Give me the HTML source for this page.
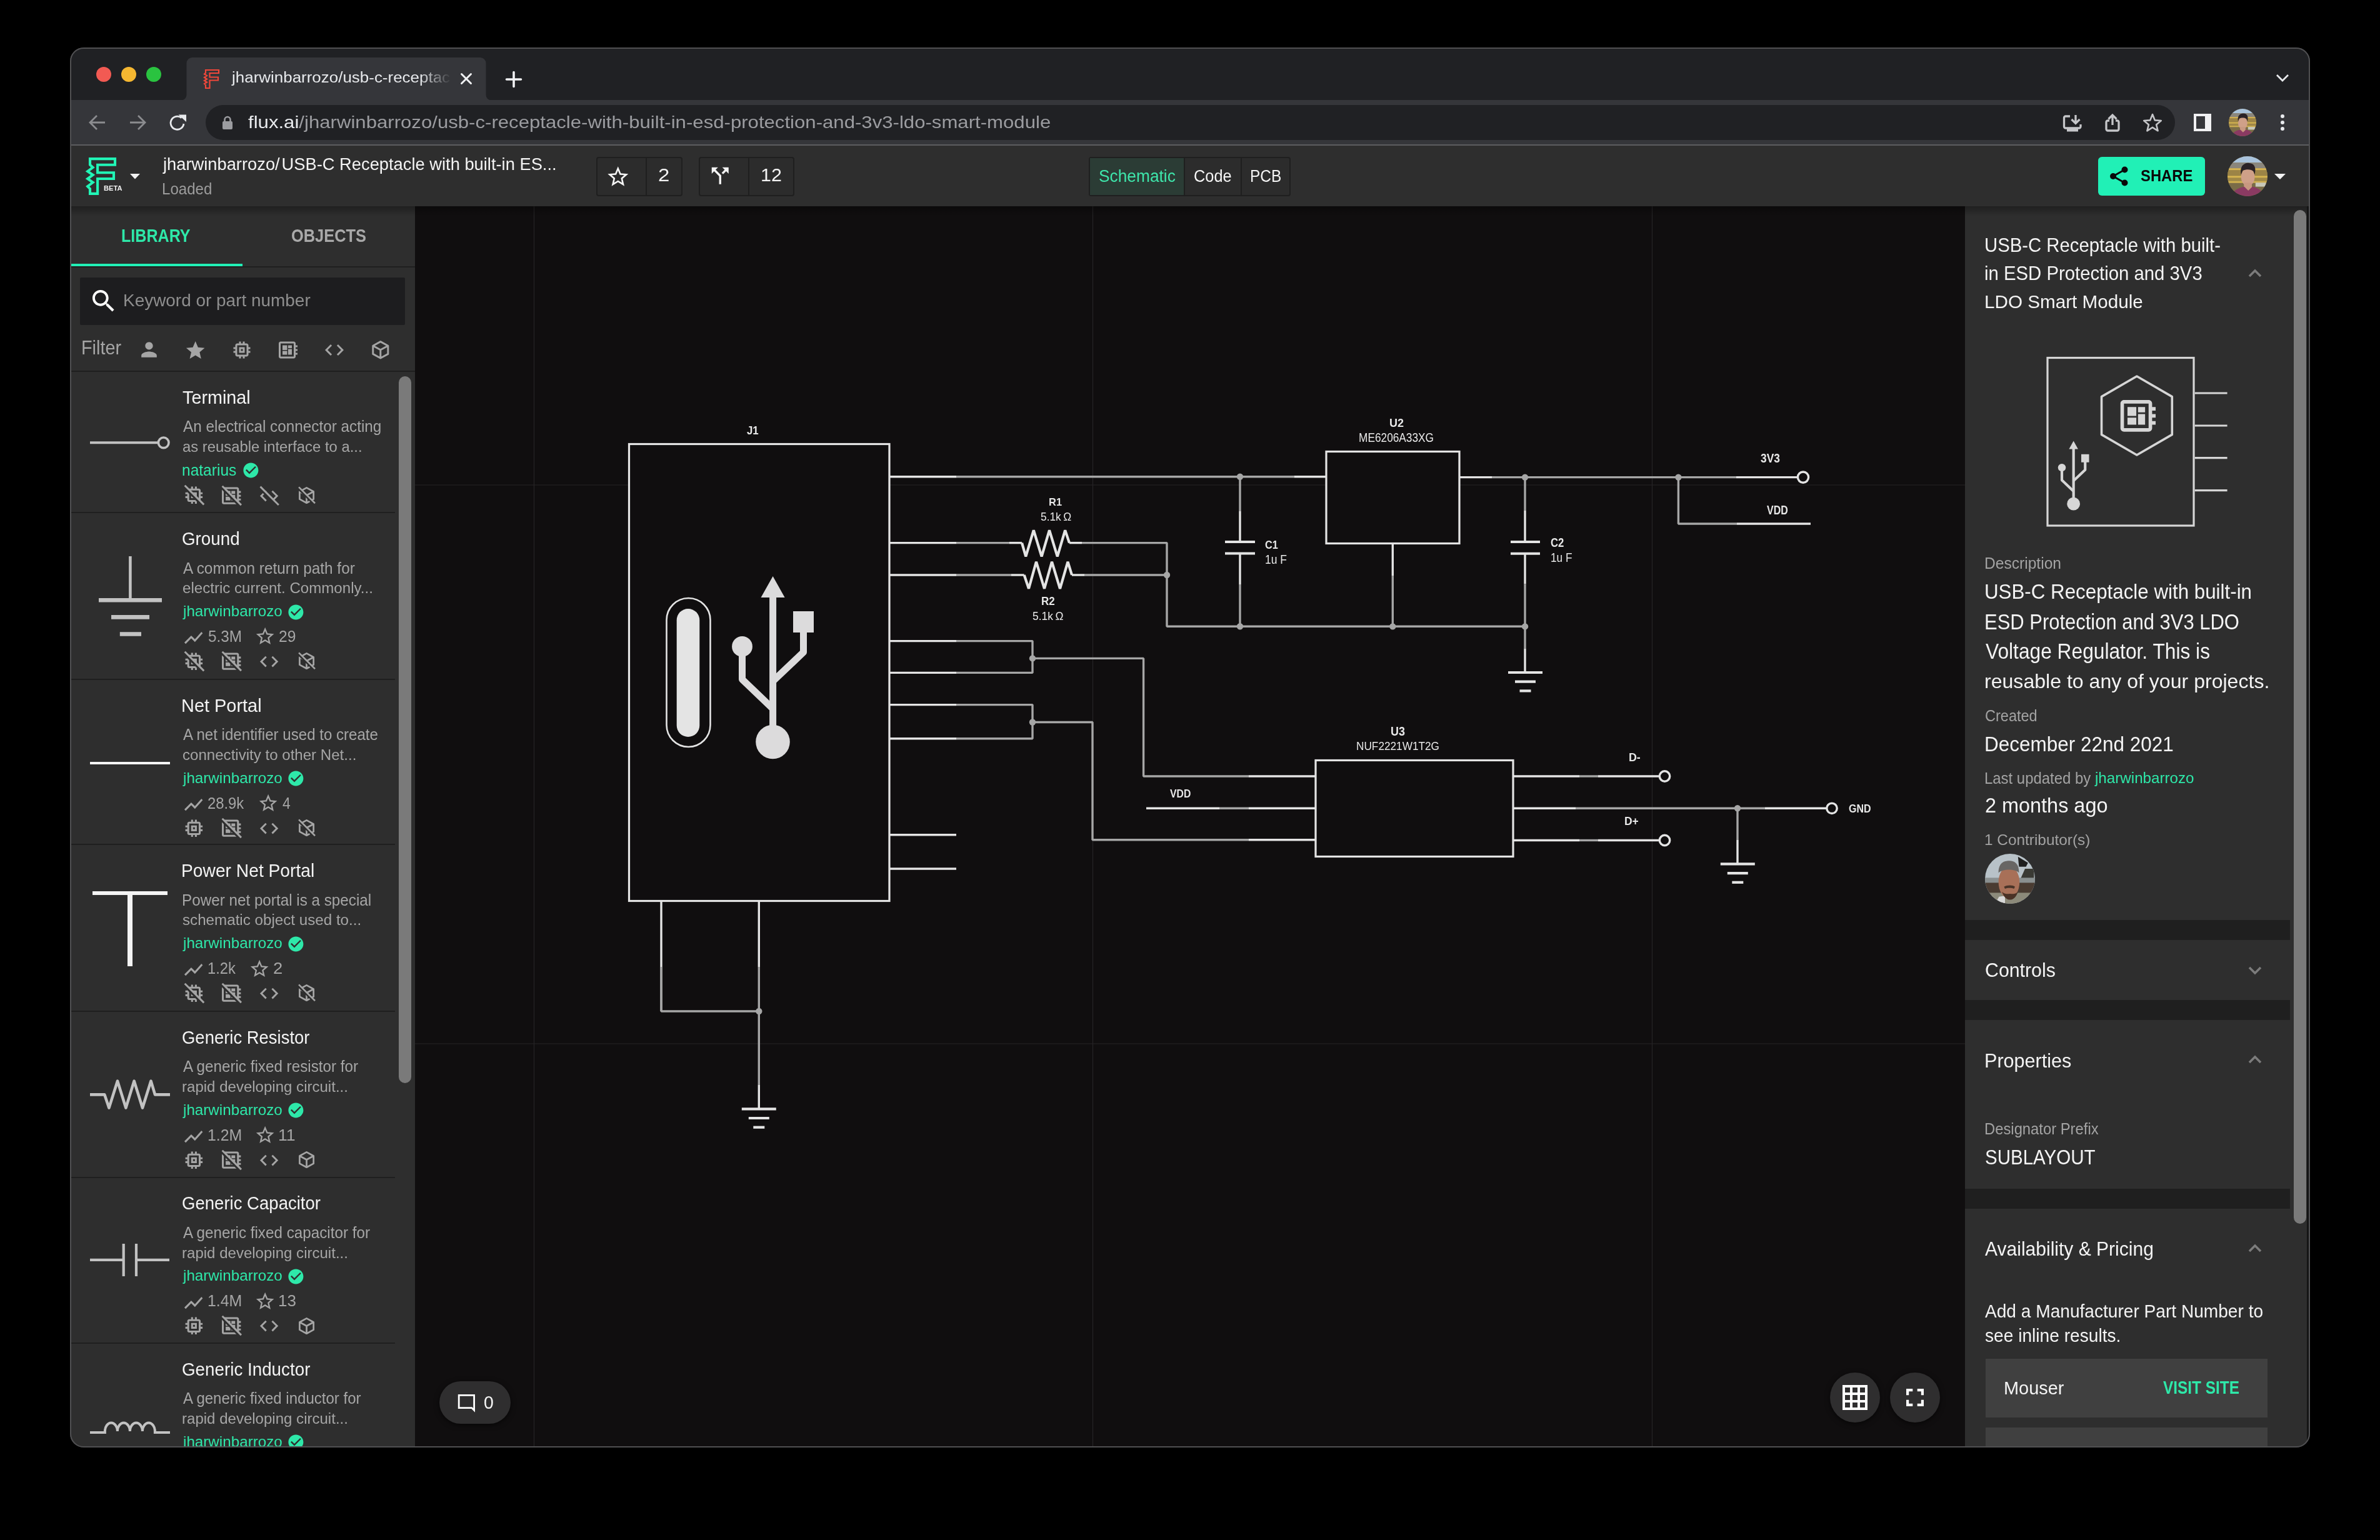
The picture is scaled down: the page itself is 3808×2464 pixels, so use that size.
<!DOCTYPE html>
<html><head><meta charset="utf-8">
<style>
*{box-sizing:border-box;margin:0;padding:0}
html,body{width:3808px;height:2464px;overflow:hidden;background:#000;font-family:"Liberation Sans",sans-serif}
.a{position:absolute}
.t{position:absolute;white-space:nowrap;line-height:1}
#win{position:absolute;left:112px;top:76px;width:3584px;height:2240px;border-radius:22px;overflow:hidden;background:#202124}
#bd{position:absolute;left:112px;top:76px;width:3584px;height:2240px;border-radius:22px;border:2px solid #505052;pointer-events:none}
#pg{position:absolute;left:-112px;top:-76px;width:3808px;height:2464px}
</style></head>
<body>
<div id="win"><div id="pg">
<!-- ===== TAB STRIP ===== -->
<div class="a" style="left:112px;top:76px;width:3584px;height:84px;background:#202124"></div>
<div class="a" style="left:154px;top:107px;width:24px;height:24px;border-radius:50%;background:#f25a53"></div>
<div class="a" style="left:194px;top:107px;width:24px;height:24px;border-radius:50%;background:#f5b731"></div>
<div class="a" style="left:234px;top:107px;width:24px;height:24px;border-radius:50%;background:#2ac340"></div>
<svg class="a" style="left:280px;top:88px" width="520" height="74" viewBox="280 88 520 74"><path d="M290 160.5 A8.5 8.5 0 0 0 298.5 152 V101 A9 9 0 0 1 307.5 92 H768.5 A9 9 0 0 1 777.5 101 V152 A8.5 8.5 0 0 0 786 160.5 V162 H290 Z" fill="#35363a"/></svg>
<!-- TABSTRIP_CONTENT --><svg class="a" style="left:320px;top:104px" width="40" height="44" viewBox="0 0 40 44"><path d="M9 8 L30 8 L30 13 L15.5 13 L15.5 19.5 L29 19.5 L29 24.5 L15.5 24.5 L15.5 37 L9 37 L9 32 L7 30 L11 27.5 L7 25 L11 22.5 L7 20 L11 17 L7 14.5 L9 12.5 Z" fill="none" stroke="#f0473a" stroke-width="2.2"/></svg><div class="a" style="left:360px;top:100px;width:362px;height:46px;overflow:hidden;-webkit-mask-image:linear-gradient(90deg,#000 0%,#000 86%,transparent 100%)"><div class="t" style="left:10.65px;top:12.47px;font-size:24.83px;color:#e8eaed;transform:scaleX(1.0452);transform-origin:0 0">jharwinbarrozo/usb-c-receptacle-with-built-in</div></div><svg class="a" style="left:734px;top:114px" width="24" height="24" viewBox="0 0 24 24"><path d="M4.5 4.5 L19.5 19.5 M19.5 4.5 L4.5 19.5" stroke="#f1f2f4" stroke-width="3" stroke-linecap="round"/></svg><svg class="a" style="left:808px;top:113px" width="28" height="28" viewBox="0 0 28 28"><path d="M14 2.5 V25.5 M2.5 14 H25.5" stroke="#f1f2f4" stroke-width="3.6" stroke-linecap="round"/></svg><svg class="a" style="left:3638px;top:114px" width="28" height="22" viewBox="0 0 28 22"><path d="M5 6 L14 15 L23 6" stroke="#e8eaed" stroke-width="2.8" fill="none"/></svg><!-- /TABSTRIP_CONTENT -->
<!-- ===== TOOLBAR ===== -->
<div class="a" style="left:112px;top:160px;width:3584px;height:72px;background:#35363a"></div>
<div class="a" style="left:329px;top:168px;width:3151px;height:56px;background:#202124;border-radius:28px"></div>
<div class="a" style="left:112px;top:231px;width:3584px;height:2px;background:#5c5d60"></div>
<!-- TOOLBAR_CONTENT --><svg class="a" style="left:140px;top:180px" width="32" height="32" viewBox="0 0 32 32"><path d="M28 16 H5 M15 5 L4 16 L15 27" stroke="#8b8c8f" stroke-width="2.8" fill="none"/></svg><svg class="a" style="left:204px;top:180px" width="32" height="32" viewBox="0 0 32 32"><path d="M4 16 H27 M17 5 L28 16 L17 27" stroke="#8b8c8f" stroke-width="2.8" fill="none"/></svg><svg class="a" style="left:268px;top:180px" width="34" height="34" viewBox="0 0 34 34"><path d="M26 18 A10.5 10.5 0 1 1 22.5 8.8" stroke="#e8eaed" stroke-width="2.8" fill="none"/><path d="M17.5 3.5 L30 3.5 L30 15 Z" fill="#e8eaed"/></svg><svg class="a" style="left:354px;top:184px" width="20" height="24" viewBox="0 0 20 24"><rect x="2" y="10" width="16" height="13" rx="2" fill="#9b9ca0"/><path d="M5.5 11 V7.5 A4.5 4.5 0 0 1 14.5 7.5 V11" stroke="#9b9ca0" stroke-width="2.6" fill="none"/></svg><div class="t" style="left:396.56px;top:182.06px;font-size:27.43px;color:#9b9ca0;transform:scaleX(1.1356);transform-origin:0 0"><span style="color:#e8eaed">flux.ai</span>/jharwinbarrozo/usb-c-receptacle-with-built-in-esd-protection-and-3v3-ldo-smart-module</div><svg class="a" style="left:3290px;top:170px" width="60" height="50" viewBox="3290 170 60 50"><path d="M3312 186 H3305 a2.5 2.5 0 0 0 -2.5 2.5 V202.5 a2.5 2.5 0 0 0 2.5 2.5 H3326.5 a2.5 2.5 0 0 0 2.5 -2.5 V199" stroke="#c5c6c9" stroke-width="3.3" fill="none"/><path d="M3321 184 V197 M3314.5 191 L3321 197.5 L3327.5 191" stroke="#c5c6c9" stroke-width="3.3" fill="none"/><rect x="3307" y="206" width="18" height="4.5" fill="#c5c6c9"/></svg><svg class="a" style="left:3360px;top:175px" width="40" height="45" viewBox="3360 175 40 45"><path d="M3375 193 H3372.5 a2.5 2.5 0 0 0 -2.5 2.5 V206.5 a2.5 2.5 0 0 0 2.5 2.5 H3387.5 a2.5 2.5 0 0 0 2.5 -2.5 V195.5 a2.5 2.5 0 0 0 -2.5 -2.5 H3385" stroke="#c5c6c9" stroke-width="3.3" fill="none"/><path d="M3380 200 V184.5 M3373.5 190.5 L3380 184 L3386.5 190.5" stroke="#c5c6c9" stroke-width="3.3" fill="none"/></svg><svg class="a" style="left:3427px;top:180px" width="34" height="34" viewBox="0 0 34 34"><path d="M17 3 L20.8 12.4 L30.8 13 L23.1 19.5 L25.6 29.3 L17 23.9 L8.4 29.3 L10.9 19.5 L3.2 13 L13.2 12.4 Z" stroke="#c5c6c9" stroke-width="2.6" fill="none" stroke-linejoin="round"/></svg><div class="a" style="left:3510px;top:182px;width:28px;height:28px;background:#f0f0f2"></div><div class="a" style="left:3514px;top:186px;width:14px;height:20px;background:#35363a"></div><svg class="a" style="left:3566px;top:174px" width="44" height="44" viewBox="0 0 100 100"><defs><clipPath id="avA"><circle cx="50" cy="50" r="50"/></clipPath></defs><g clip-path="url(#avA)">
<rect width="100" height="100" fill="#8c7a48"/>
<rect y="0" width="100" height="16" fill="#a9c3dc"/>
<rect y="16" width="100" height="14" fill="#8a867c"/>
<rect y="30" width="100" height="5" fill="#d6b454"/>
<rect y="35" width="100" height="14" fill="#9c8446"/>
<rect y="49" width="100" height="5" fill="#d8b650"/>
<rect y="54" width="100" height="8" fill="#a08848"/>
<rect y="62" width="100" height="5" fill="#d0b050"/>
<rect y="67" width="100" height="20" fill="#7a6c48"/>
<rect x="70" y="66" width="26" height="10" fill="#c8c8b8"/>
<ellipse cx="51" cy="52" rx="17" ry="22" fill="#cfa088"/>
<rect x="41" y="66" width="20" height="22" fill="#c89880"/>
<path d="M34 46 C30 24 42 16 54 17 C68 18 72 28 68 46 L65 38 C60 32 46 32 38 36 Z" fill="#2a2226"/>
<path d="M10 100 C14 84 30 78 42 76 L52 86 L62 76 C74 78 86 84 92 100 Z" fill="#8a3a62"/>
</g></svg><div class="a" style="left:3649px;top:183px;width:6px;height:6px;border-radius:50%;background:#e8eaed"></div><div class="a" style="left:3649px;top:193px;width:6px;height:6px;border-radius:50%;background:#e8eaed"></div><div class="a" style="left:3649px;top:203px;width:6px;height:6px;border-radius:50%;background:#e8eaed"></div><!-- /TOOLBAR_CONTENT -->
<!-- ===== APP HEADER ===== -->
<div class="a" style="left:112px;top:233px;width:3584px;height:97px;background:#2e2e2e"></div>
<!-- HEADER_CONTENT --><svg class="a" style="left:120px;top:236px" width="200" height="90" viewBox="0 0 200 90"><path d="M24 18.1 L64 18.1 L64 27.7 L36.1 27.7 L36.1 40.3 L62 40.3 L62 50 L36.1 50 L36.1 73.9 L24 73.9 L24 66 L20.2 62.2 L28.6 55.9 L20.2 50 L28.6 43.9 L20.2 38.2 L28.6 31.9 L24 27.7 Z" fill="none" stroke="#21f5b6" stroke-width="4.1"/><path d="M88 42 L104 42 L96 50.5 Z" fill="#f2f2f2"/></svg><div class="t" style="left:165.87px;top:296.22px;font-size:11.19px;color:#f2f2f2;font-weight:700;transform:scaleX(0.9928);transform-origin:0 0">BETA</div><div class="t" style="left:260.98px;top:248.09px;font-size:28.34px;color:#f4f4f4;transform:scaleX(0.9638);transform-origin:0 0">jharwinbarrozo/<span style="margin-left:3px"></span>USB-C Receptacle with built-in ES...</div><div class="t" style="left:259.32px;top:290.85px;font-size:24.85px;color:#9c9c9c;transform:scaleX(0.9696);transform-origin:0 0">Loaded</div><div class="a" style="left:954px;top:251px;width:138px;height:63px;border:2px solid #1f1f1f;border-radius:4px;background:#2c2c2c"></div><div class="a" style="left:1033px;top:253px;width:2px;height:59px;background:#1f1f1f"></div><svg class="a" style="left:968.7px;top:262.7px" width="39.6" height="39.6" viewBox="0 0 24 24"><path d="M22 9.24l-7.19-.62L12 2 9.19 8.63 2 9.24l5.46 4.73L5.82 21 12 17.27 18.18 21l-1.63-7.03L22 9.24zM12 15.4l-3.76 2.27 1-4.28-3.32-2.88 4.38-.38L12 6.1l1.71 4.04 4.38.38-3.32 2.88 1 4.28L12 15.4z" fill="#f5f5f5"/></svg><div class="t" style="left:1053.36px;top:266.38px;font-size:29.07px;color:#f4f4f4;transform:scaleX(1.1316);transform-origin:0 0">2</div><div class="a" style="left:1118px;top:251px;width:153px;height:63px;border:2px solid #1f1f1f;border-radius:4px;background:#2c2c2c"></div><div class="a" style="left:1197px;top:253px;width:2px;height:59px;background:#1f1f1f"></div><svg class="a" style="left:1132.25px;top:261.25px" width="40.5" height="40.5" viewBox="0 0 24 24"><path d="M14 4l2.29 2.29-2.88 2.88 1.42 1.42 2.88-2.88L20 10V4zm-4 0H4v6l2.29-2.29 4.71 4.7V20h2v-8.41l-5.29-5.3z" fill="#f5f5f5"/></svg><div class="t" style="left:1216.69px;top:266.38px;font-size:29.07px;color:#f4f4f4;transform:scaleX(1.0467);transform-origin:0 0">12</div><div class="a" style="left:1742px;top:251px;width:323px;height:63px;border:2px solid #1f1f1f;border-radius:4px;background:#2c2c2c"></div><div class="a" style="left:1744px;top:253px;width:151px;height:59px;background:#2b3c35"></div><div class="a" style="left:1894px;top:253px;width:2px;height:59px;background:#1f1f1f"></div><div class="a" style="left:1985px;top:253px;width:2px;height:59px;background:#1f1f1f"></div><div class="t" style="left:1757.82px;top:267.98px;font-size:27.18px;color:#3ee6ab;transform:scaleX(0.9684);transform-origin:0 0">Schematic</div><div class="t" style="left:1910.33px;top:267.98px;font-size:27.18px;color:#f4f4f4;transform:scaleX(0.9342);transform-origin:0 0">Code</div><div class="t" style="left:1999.79px;top:267.98px;font-size:27.18px;color:#f4f4f4;transform:scaleX(0.9016);transform-origin:0 0">PCB</div><div class="a" style="left:3357px;top:251px;width:171px;height:62px;border-radius:6px;background:#21f0b6"></div><svg class="a" style="left:3374px;top:264px" width="34" height="36" viewBox="0 0 34 36"><circle cx="25.5" cy="7.5" r="5" fill="#0a0a0a"/><circle cx="7" cy="18" r="5" fill="#0a0a0a"/><circle cx="25.5" cy="28.5" r="5" fill="#0a0a0a"/><path d="M25.5 7.5 L7 18 L25.5 28.5" stroke="#0a0a0a" stroke-width="3" fill="none"/></svg><div class="t" style="left:3425.43px;top:267.84px;font-size:26.16px;color:#0a0a0a;font-weight:700;transform:scaleX(0.9105);transform-origin:0 0">SHARE</div><svg class="a" style="left:3564px;top:250px" width="64" height="64" viewBox="0 0 100 100"><defs><clipPath id="avB"><circle cx="50" cy="50" r="50"/></clipPath></defs><g clip-path="url(#avB)">
<rect width="100" height="100" fill="#8c7a48"/>
<rect y="0" width="100" height="16" fill="#a9c3dc"/>
<rect y="16" width="100" height="14" fill="#8a867c"/>
<rect y="30" width="100" height="5" fill="#d6b454"/>
<rect y="35" width="100" height="14" fill="#9c8446"/>
<rect y="49" width="100" height="5" fill="#d8b650"/>
<rect y="54" width="100" height="8" fill="#a08848"/>
<rect y="62" width="100" height="5" fill="#d0b050"/>
<rect y="67" width="100" height="20" fill="#7a6c48"/>
<rect x="70" y="66" width="26" height="10" fill="#c8c8b8"/>
<ellipse cx="51" cy="52" rx="17" ry="22" fill="#cfa088"/>
<rect x="41" y="66" width="20" height="22" fill="#c89880"/>
<path d="M34 46 C30 24 42 16 54 17 C68 18 72 28 68 46 L65 38 C60 32 46 32 38 36 Z" fill="#2a2226"/>
<path d="M10 100 C14 84 30 78 42 76 L52 86 L62 76 C74 78 86 84 92 100 Z" fill="#8a3a62"/>
</g></svg><svg class="a" style="left:3636px;top:276px" width="24" height="14" viewBox="0 0 24 14"><path d="M3 2 L21 2 L12 11 Z" fill="#f2f2f2"/></svg><!-- /HEADER_CONTENT -->
<!-- ===== LEFT PANEL ===== -->
<div class="a" style="left:112px;top:330px;width:552px;height:1990px;background:#2e2e2e"></div>
<!-- LEFT_CONTENT --><div class="t" style="left:194.34px;top:363.38px;font-size:29.07px;color:#2ee8a9;font-weight:700;transform:scaleX(0.8630);transform-origin:0 0">LIBRARY</div><div class="t" style="left:465.96px;top:363.38px;font-size:29.07px;color:#a9a9a9;font-weight:700;transform:scaleX(0.8743);transform-origin:0 0">OBJECTS</div><div class="a" style="left:112px;top:422px;width:276px;height:4px;background:#21f0b6"></div><div class="a" style="left:112px;top:426px;width:552px;height:2px;background:#1f1f1f"></div><div class="a" style="left:128px;top:444px;width:520px;height:76px;background:#1d1d1f;border-radius:2px"></div><svg class="a" style="left:142.0px;top:457.8px;overflow:visible" width="47.5" height="47.5" viewBox="0 0 24 24"><path d="M15.5 14h-.79l-.28-.27C15.41 12.59 16 11.11 16 9.5 16 5.91 13.09 3 9.5 3S3 5.91 3 9.5 5.91 16 9.5 16c1.61 0 3.09-.59 4.23-1.57l.27.28v.79l5 4.99L20.49 19l-4.99-5zm-6 0C7.01 14 5 11.99 5 9.5S7.01 5 9.5 5 14 7.01 14 9.5 11.99 14 9.5 14z" fill="#ffffff"/></svg><div class="t" style="left:196.71px;top:465.87px;font-size:28.49px;color:#8e8e8e;transform:scaleX(0.9808);transform-origin:0 0">Keyword or part number</div><div class="t" style="left:130.44px;top:541.15px;font-size:30.52px;color:#a5a5a5;transform:scaleX(0.9440);transform-origin:0 0">Filter</div><svg class="a" style="left:220.4px;top:541.3px;overflow:visible" width="37.0" height="37.0" viewBox="0 0 24 24"><path d="M12 12c2.21 0 4-1.79 4-4s-1.79-4-4-4-4 1.79-4 4 1.79 4 4 4zm0 2c-2.67 0-8 1.34-8 4v2h16v-2c0-2.66-5.33-4-8-4z" fill="#a5a5a5"/></svg><svg class="a" style="left:295.0px;top:543.4px;overflow:visible" width="35.4" height="35.4" viewBox="0 0 24 24"><path d="M12 17.27L18.18 21l-1.64-7.03L22 9.24l-7.19-.61L12 2 9.19 8.63 2 9.24l5.46 4.73L5.82 21z" fill="#a5a5a5"/></svg><svg class="a" style="left:368.5px;top:541.8px;overflow:visible" width="36.0" height="36.0" viewBox="0 0 24 24"><path d="M15 9H9v6h6V9zm-2 4h-2v-2h2v2zm8-2V9h-2V7c0-1.1-.9-2-2-2h-2V3h-2v2h-2V3H9v2H7c-1.1 0-2 .9-2 2v2H3v2h2v2H3v2h2v2c0 1.1.9 2 2 2h2v2h2v-2h2v2h2v-2h2c1.1 0 2-.9 2-2v-2h2v-2h-2v-2h2zm-4 6H7V7h10v10z" fill="#a5a5a5"/></svg><svg class="a" style="left:443.0px;top:541.8px;overflow:visible" width="36.0" height="36.0" viewBox="0 0 24 24"><path d="M22 9V7h-2V5c0-1.1-.9-2-2-2H4c-1.1 0-2 .9-2 2v14c0 1.1.9 2 2 2h14c1.1 0 2-.9 2-2v-2h2v-2h-2v-2h2v-2h-2V9h2zm-4 10H4V5h14v14zM6 13h5v4H6zm6-6h4v3h-4zM6 7h5v5H6zm6 4h4v6h-4z" fill="#a5a5a5"/></svg><svg class="a" style="left:517.0px;top:542.0px;overflow:visible" width="36.0" height="36.0" viewBox="0 0 24 24"><path d="M9.4 16.6L4.8 12l4.6-4.6L8 6l-6 6 6 6 1.4-1.4zm5.2 0l4.6-4.6-4.6-4.6L16 6l6 6-6 6-1.4-1.4z" fill="#a5a5a5"/></svg><svg class="a" style="left:592.4px;top:543.2px;overflow:visible" width="33.6" height="33.6" viewBox="0 0 24 24"><path d="M12 2.6 L20.6 7.3 V16.7 L12 21.4 L3.4 16.7 V7.3 Z M3.4 7.3 L12 12 L20.6 7.3 M12 12 V21.4" fill="none" stroke="#a5a5a5" stroke-width="2.1" stroke-linejoin="round"/></svg><div class="a" style="left:112px;top:593px;width:552px;height:2px;background:#1f1f1f"></div><div class="t" style="left:292.17px;top:620.51px;font-size:29.51px;color:#f4f4f4;transform:scaleX(0.9752);transform-origin:0 0">Terminal</div><div class="t" style="left:292.55px;top:670.39px;font-size:25.87px;color:#a6a6a6;transform:scaleX(0.9395);transform-origin:0 0">An electrical connector acting</div><div class="t" style="left:291.60px;top:703.09px;font-size:24.69px;color:#a6a6a6;transform:scaleX(0.9655);transform-origin:0 0">as reusable interface to a...</div><div class="t" style="left:291.18px;top:738.78px;font-size:26.00px;color:#2ee8a9;transform:scaleX(0.9437);transform-origin:0 0">natarius</div><svg class="a" style="left:386.6px;top:738.4px;overflow:visible" width="28.8" height="28.8" viewBox="0 0 24 24"><path d="M12 2C6.48 2 2 6.48 2 12s4.48 10 10 10 10-4.48 10-10S17.52 2 12 2zm-2 15l-5-5 1.41-1.41L10 14.17l7.59-7.59L19 8l-9 9z" fill="#2ee8a9"/></svg><svg class="a" style="left:291.8px;top:774.4px;overflow:visible" width="36.7" height="36.7" viewBox="0 0 24 24"><path d="M15 9H9v6h6V9zm-2 4h-2v-2h2v2zm8-2V9h-2V7c0-1.1-.9-2-2-2h-2V3h-2v2h-2V3H9v2H7c-1.1 0-2 .9-2 2v2H3v2h2v2H3v2h2v2c0 1.1.9 2 2 2h2v2h2v-2h2v2h2v-2h2c1.1 0 2-.9 2-2v-2h2v-2h-2v-2h2zm-4 6H7V7h10v10z" fill="#a5a5a5"/><path d="M2.2 3.4 L21.6 22.8" stroke="#2e2e2e" stroke-width="3.4"/><path d="M2.4 1.8 L22.4 21.8" stroke="#a5a5a5" stroke-width="2"/></svg><svg class="a" style="left:351.7px;top:774.5px;overflow:visible" width="36.4" height="36.4" viewBox="0 0 24 24"><path d="M22 9V7h-2V5c0-1.1-.9-2-2-2H4c-1.1 0-2 .9-2 2v14c0 1.1.9 2 2 2h14c1.1 0 2-.9 2-2v-2h2v-2h-2v-2h2v-2h-2V9h2zm-4 10H4V5h14v14zM6 13h5v4H6zm6-6h4v3h-4zM6 7h5v5H6zm6 4h4v6h-4z" fill="#a5a5a5"/><path d="M2.2 3.4 L21.6 22.8" stroke="#2e2e2e" stroke-width="3.4"/><path d="M2.4 1.8 L22.4 21.8" stroke="#a5a5a5" stroke-width="2"/></svg><svg class="a" style="left:412.8px;top:775.6px;overflow:visible" width="35.2" height="35.2" viewBox="0 0 24 24"><path d="M9.4 16.6L4.8 12l4.6-4.6L8 6l-6 6 6 6 1.4-1.4zm5.2 0l4.6-4.6-4.6-4.6L16 6l6 6-6 6-1.4-1.4z" fill="#a5a5a5"/><path d="M2.2 3.4 L21.6 22.8" stroke="#2e2e2e" stroke-width="3.4"/><path d="M2.4 1.8 L22.4 21.8" stroke="#a5a5a5" stroke-width="2"/></svg><svg class="a" style="left:474.9px;top:777.0px;overflow:visible" width="31.1" height="31.1" viewBox="0 0 24 24"><path d="M12 2.6 L20.6 7.3 V16.7 L12 21.4 L3.4 16.7 V7.3 Z M3.4 7.3 L12 12 L20.6 7.3 M12 12 V21.4" fill="none" stroke="#a5a5a5" stroke-width="2.1" stroke-linejoin="round"/><path d="M2.2 3.4 L21.6 22.8" stroke="#2e2e2e" stroke-width="3.4"/><path d="M2.4 1.8 L22.4 21.8" stroke="#a5a5a5" stroke-width="2"/></svg><svg class="a" style="left:130px;top:684px" width="150" height="50" viewBox="0 0 150 50"><path d="M14 24.3 H122" stroke="#c2c2c2" stroke-width="4"/><circle cx="131.7" cy="24.3" r="8.3" stroke="#c2c2c2" stroke-width="3.6" fill="none"/></svg><div class="t" style="left:291.41px;top:846.71px;font-size:29.51px;color:#f4f4f4;transform:scaleX(0.9417);transform-origin:0 0">Ground</div><div class="t" style="left:292.55px;top:896.59px;font-size:25.87px;color:#a6a6a6;transform:scaleX(0.9418);transform-origin:0 0">A common return path for</div><div class="t" style="left:291.59px;top:929.29px;font-size:24.69px;color:#a6a6a6;transform:scaleX(0.9760);transform-origin:0 0">electric current. Commonly...</div><div class="t" style="left:292.51px;top:966.90px;font-size:23.73px;color:#2ee8a9;transform:scaleX(1.0208);transform-origin:0 0">jharwinbarrozo</div><svg class="a" style="left:458.6px;top:964.6px;overflow:visible" width="28.8" height="28.8" viewBox="0 0 24 24"><path d="M12 2C6.48 2 2 6.48 2 12s4.48 10 10 10 10-4.48 10-10S17.52 2 12 2zm-2 15l-5-5 1.41-1.41L10 14.17l7.59-7.59L19 8l-9 9z" fill="#2ee8a9"/></svg><svg class="a" style="left:292.4px;top:1003.3px;overflow:visible" width="35.3" height="35.3" viewBox="0 0 24 24"><path d="M3.5 18.49l6-6.01 4 4L22 6.92l-1.41-1.41-7.09 7.97-4-4L2 16.99z" fill="#a5a5a5"/></svg><div class="t" style="left:332.63px;top:1005.73px;font-size:25.00px;color:#a5a5a5;transform:scaleX(0.9729);transform-origin:0 0">5.3M</div><svg class="a" style="left:406.8px;top:1001.4px;overflow:visible" width="34.3" height="34.3" viewBox="0 0 24 24"><path d="M22 9.24l-7.19-.62L12 2 9.19 8.63 2 9.24l5.46 4.73L5.82 21 12 17.27 18.18 21l-1.63-7.03L22 9.24zM12 15.4l-3.76 2.27 1-4.28-3.32-2.88 4.38-.38L12 6.1l1.71 4.04 4.38.38-3.32 2.88 1 4.28L12 15.4z" fill="#a5a5a5"/></svg><div class="t" style="left:445.67px;top:1005.73px;font-size:25.00px;color:#a5a5a5;transform:scaleX(0.9852);transform-origin:0 0">29</div><svg class="a" style="left:291.8px;top:1039.7px;overflow:visible" width="36.7" height="36.7" viewBox="0 0 24 24"><path d="M15 9H9v6h6V9zm-2 4h-2v-2h2v2zm8-2V9h-2V7c0-1.1-.9-2-2-2h-2V3h-2v2h-2V3H9v2H7c-1.1 0-2 .9-2 2v2H3v2h2v2H3v2h2v2c0 1.1.9 2 2 2h2v2h2v-2h2v2h2v-2h2c1.1 0 2-.9 2-2v-2h2v-2h-2v-2h2zm-4 6H7V7h10v10z" fill="#a5a5a5"/><path d="M2.2 3.4 L21.6 22.8" stroke="#2e2e2e" stroke-width="3.4"/><path d="M2.4 1.8 L22.4 21.8" stroke="#a5a5a5" stroke-width="2"/></svg><svg class="a" style="left:351.7px;top:1039.8px;overflow:visible" width="36.4" height="36.4" viewBox="0 0 24 24"><path d="M22 9V7h-2V5c0-1.1-.9-2-2-2H4c-1.1 0-2 .9-2 2v14c0 1.1.9 2 2 2h14c1.1 0 2-.9 2-2v-2h2v-2h-2v-2h2v-2h-2V9h2zm-4 10H4V5h14v14zM6 13h5v4H6zm6-6h4v3h-4zM6 7h5v5H6zm6 4h4v6h-4z" fill="#a5a5a5"/><path d="M2.2 3.4 L21.6 22.8" stroke="#2e2e2e" stroke-width="3.4"/><path d="M2.4 1.8 L22.4 21.8" stroke="#a5a5a5" stroke-width="2"/></svg><svg class="a" style="left:412.8px;top:1040.9px;overflow:visible" width="35.2" height="35.2" viewBox="0 0 24 24"><path d="M9.4 16.6L4.8 12l4.6-4.6L8 6l-6 6 6 6 1.4-1.4zm5.2 0l4.6-4.6-4.6-4.6L16 6l6 6-6 6-1.4-1.4z" fill="#a5a5a5"/></svg><svg class="a" style="left:474.9px;top:1042.3px;overflow:visible" width="31.1" height="31.1" viewBox="0 0 24 24"><path d="M12 2.6 L20.6 7.3 V16.7 L12 21.4 L3.4 16.7 V7.3 Z M3.4 7.3 L12 12 L20.6 7.3 M12 12 V21.4" fill="none" stroke="#a5a5a5" stroke-width="2.1" stroke-linejoin="round"/><path d="M2.2 3.4 L21.6 22.8" stroke="#2e2e2e" stroke-width="3.4"/><path d="M2.4 1.8 L22.4 21.8" stroke="#a5a5a5" stroke-width="2"/></svg><div class="a" style="left:112px;top:819.2px;width:520px;height:2px;background:#1f1f1f"></div><svg class="a" style="left:130px;top:820px" width="150" height="220" viewBox="130 820 150 220"><path d="M208.4 890 V958" stroke="#c2c2c2" stroke-width="4.6"/><path d="M158 960.3 H259 M178 987.4 H239 M191.8 1014.5 H226" stroke="#c2c2c2" stroke-width="6.6"/></svg><div class="t" style="left:290.43px;top:1113.51px;font-size:29.51px;color:#f4f4f4;transform:scaleX(0.9802);transform-origin:0 0">Net Portal</div><div class="t" style="left:292.55px;top:1163.39px;font-size:25.87px;color:#a6a6a6;transform:scaleX(0.9313);transform-origin:0 0">A net identifier used to create</div><div class="t" style="left:291.59px;top:1196.09px;font-size:24.69px;color:#a6a6a6;transform:scaleX(0.9753);transform-origin:0 0">connectivity to other Net...</div><div class="t" style="left:292.51px;top:1233.70px;font-size:23.73px;color:#2ee8a9;transform:scaleX(1.0208);transform-origin:0 0">jharwinbarrozo</div><svg class="a" style="left:458.6px;top:1231.4px;overflow:visible" width="28.8" height="28.8" viewBox="0 0 24 24"><path d="M12 2C6.48 2 2 6.48 2 12s4.48 10 10 10 10-4.48 10-10S17.52 2 12 2zm-2 15l-5-5 1.41-1.41L10 14.17l7.59-7.59L19 8l-9 9z" fill="#2ee8a9"/></svg><svg class="a" style="left:292.4px;top:1270.1px;overflow:visible" width="35.3" height="35.3" viewBox="0 0 24 24"><path d="M3.5 18.49l6-6.01 4 4L22 6.92l-1.41-1.41-7.09 7.97-4-4L2 16.99z" fill="#a5a5a5"/></svg><div class="t" style="left:332.41px;top:1272.53px;font-size:25.00px;color:#a5a5a5;transform:scaleX(0.9525);transform-origin:0 0">28.9k</div><svg class="a" style="left:412.3px;top:1268.2px;overflow:visible" width="34.3" height="34.3" viewBox="0 0 24 24"><path d="M22 9.24l-7.19-.62L12 2 9.19 8.63 2 9.24l5.46 4.73L5.82 21 12 17.27 18.18 21l-1.63-7.03L22 9.24zM12 15.4l-3.76 2.27 1-4.28-3.32-2.88 4.38-.38L12 6.1l1.71 4.04 4.38.38-3.32 2.88 1 4.28L12 15.4z" fill="#a5a5a5"/></svg><div class="t" style="left:451.89px;top:1272.53px;font-size:25.00px;color:#a5a5a5;transform:scaleX(0.9188);transform-origin:0 0">4</div><svg class="a" style="left:291.8px;top:1306.5px;overflow:visible" width="36.7" height="36.7" viewBox="0 0 24 24"><path d="M15 9H9v6h6V9zm-2 4h-2v-2h2v2zm8-2V9h-2V7c0-1.1-.9-2-2-2h-2V3h-2v2h-2V3H9v2H7c-1.1 0-2 .9-2 2v2H3v2h2v2H3v2h2v2c0 1.1.9 2 2 2h2v2h2v-2h2v2h2v-2h2c1.1 0 2-.9 2-2v-2h2v-2h-2v-2h2zm-4 6H7V7h10v10z" fill="#a5a5a5"/></svg><svg class="a" style="left:351.7px;top:1306.6px;overflow:visible" width="36.4" height="36.4" viewBox="0 0 24 24"><path d="M22 9V7h-2V5c0-1.1-.9-2-2-2H4c-1.1 0-2 .9-2 2v14c0 1.1.9 2 2 2h14c1.1 0 2-.9 2-2v-2h2v-2h-2v-2h2v-2h-2V9h2zm-4 10H4V5h14v14zM6 13h5v4H6zm6-6h4v3h-4zM6 7h5v5H6zm6 4h4v6h-4z" fill="#a5a5a5"/><path d="M2.2 3.4 L21.6 22.8" stroke="#2e2e2e" stroke-width="3.4"/><path d="M2.4 1.8 L22.4 21.8" stroke="#a5a5a5" stroke-width="2"/></svg><svg class="a" style="left:412.8px;top:1307.7px;overflow:visible" width="35.2" height="35.2" viewBox="0 0 24 24"><path d="M9.4 16.6L4.8 12l4.6-4.6L8 6l-6 6 6 6 1.4-1.4zm5.2 0l4.6-4.6-4.6-4.6L16 6l6 6-6 6-1.4-1.4z" fill="#a5a5a5"/></svg><svg class="a" style="left:474.9px;top:1309.1px;overflow:visible" width="31.1" height="31.1" viewBox="0 0 24 24"><path d="M12 2.6 L20.6 7.3 V16.7 L12 21.4 L3.4 16.7 V7.3 Z M3.4 7.3 L12 12 L20.6 7.3 M12 12 V21.4" fill="none" stroke="#a5a5a5" stroke-width="2.1" stroke-linejoin="round"/><path d="M2.2 3.4 L21.6 22.8" stroke="#2e2e2e" stroke-width="3.4"/><path d="M2.4 1.8 L22.4 21.8" stroke="#a5a5a5" stroke-width="2"/></svg><div class="a" style="left:112px;top:1086.0px;width:520px;height:2px;background:#1f1f1f"></div><div class="a" style="left:144px;top:1218.5px;width:128px;height:4px;background:#f4f4f4"></div><div class="t" style="left:290.49px;top:1377.81px;font-size:29.51px;color:#f4f4f4;transform:scaleX(0.9564);transform-origin:0 0">Power Net Portal</div><div class="t" style="left:290.61px;top:1427.69px;font-size:25.87px;color:#a6a6a6;transform:scaleX(0.9374);transform-origin:0 0">Power net portal is a special</div><div class="t" style="left:291.95px;top:1460.39px;font-size:24.69px;color:#a6a6a6;transform:scaleX(0.9792);transform-origin:0 0">schematic object used to...</div><div class="t" style="left:292.51px;top:1498.00px;font-size:23.73px;color:#2ee8a9;transform:scaleX(1.0208);transform-origin:0 0">jharwinbarrozo</div><svg class="a" style="left:458.6px;top:1495.7px;overflow:visible" width="28.8" height="28.8" viewBox="0 0 24 24"><path d="M12 2C6.48 2 2 6.48 2 12s4.48 10 10 10 10-4.48 10-10S17.52 2 12 2zm-2 15l-5-5 1.41-1.41L10 14.17l7.59-7.59L19 8l-9 9z" fill="#2ee8a9"/></svg><svg class="a" style="left:292.4px;top:1534.4px;overflow:visible" width="35.3" height="35.3" viewBox="0 0 24 24"><path d="M3.5 18.49l6-6.01 4 4L22 6.92l-1.41-1.41-7.09 7.97-4-4L2 16.99z" fill="#a5a5a5"/></svg><div class="t" style="left:331.79px;top:1536.83px;font-size:25.00px;color:#a5a5a5;transform:scaleX(0.9515);transform-origin:0 0">1.2k</div><svg class="a" style="left:398.4px;top:1532.5px;overflow:visible" width="34.3" height="34.3" viewBox="0 0 24 24"><path d="M22 9.24l-7.19-.62L12 2 9.19 8.63 2 9.24l5.46 4.73L5.82 21 12 17.27 18.18 21l-1.63-7.03L22 9.24zM12 15.4l-3.76 2.27 1-4.28-3.32-2.88 4.38-.38L12 6.1l1.71 4.04 4.38.38-3.32 2.88 1 4.28L12 15.4z" fill="#a5a5a5"/></svg><div class="t" style="left:437.13px;top:1536.83px;font-size:25.00px;color:#a5a5a5;transform:scaleX(1.0965);transform-origin:0 0">2</div><svg class="a" style="left:291.8px;top:1570.8px;overflow:visible" width="36.7" height="36.7" viewBox="0 0 24 24"><path d="M15 9H9v6h6V9zm-2 4h-2v-2h2v2zm8-2V9h-2V7c0-1.1-.9-2-2-2h-2V3h-2v2h-2V3H9v2H7c-1.1 0-2 .9-2 2v2H3v2h2v2H3v2h2v2c0 1.1.9 2 2 2h2v2h2v-2h2v2h2v-2h2c1.1 0 2-.9 2-2v-2h2v-2h-2v-2h2zm-4 6H7V7h10v10z" fill="#a5a5a5"/><path d="M2.2 3.4 L21.6 22.8" stroke="#2e2e2e" stroke-width="3.4"/><path d="M2.4 1.8 L22.4 21.8" stroke="#a5a5a5" stroke-width="2"/></svg><svg class="a" style="left:351.7px;top:1570.9px;overflow:visible" width="36.4" height="36.4" viewBox="0 0 24 24"><path d="M22 9V7h-2V5c0-1.1-.9-2-2-2H4c-1.1 0-2 .9-2 2v14c0 1.1.9 2 2 2h14c1.1 0 2-.9 2-2v-2h2v-2h-2v-2h2v-2h-2V9h2zm-4 10H4V5h14v14zM6 13h5v4H6zm6-6h4v3h-4zM6 7h5v5H6zm6 4h4v6h-4z" fill="#a5a5a5"/><path d="M2.2 3.4 L21.6 22.8" stroke="#2e2e2e" stroke-width="3.4"/><path d="M2.4 1.8 L22.4 21.8" stroke="#a5a5a5" stroke-width="2"/></svg><svg class="a" style="left:412.8px;top:1572.0px;overflow:visible" width="35.2" height="35.2" viewBox="0 0 24 24"><path d="M9.4 16.6L4.8 12l4.6-4.6L8 6l-6 6 6 6 1.4-1.4zm5.2 0l4.6-4.6-4.6-4.6L16 6l6 6-6 6-1.4-1.4z" fill="#a5a5a5"/></svg><svg class="a" style="left:474.9px;top:1573.4px;overflow:visible" width="31.1" height="31.1" viewBox="0 0 24 24"><path d="M12 2.6 L20.6 7.3 V16.7 L12 21.4 L3.4 16.7 V7.3 Z M3.4 7.3 L12 12 L20.6 7.3 M12 12 V21.4" fill="none" stroke="#a5a5a5" stroke-width="2.1" stroke-linejoin="round"/><path d="M2.2 3.4 L21.6 22.8" stroke="#2e2e2e" stroke-width="3.4"/><path d="M2.4 1.8 L22.4 21.8" stroke="#a5a5a5" stroke-width="2"/></svg><div class="a" style="left:112px;top:1350.3px;width:520px;height:2px;background:#1f1f1f"></div><div class="a" style="left:147.7px;top:1426px;width:120.3px;height:6px;background:#f4f4f4"></div><div class="a" style="left:204px;top:1426px;width:7.7px;height:120px;background:#f4f4f4"></div><div class="t" style="left:291.43px;top:1644.51px;font-size:29.51px;color:#f4f4f4;transform:scaleX(0.9307);transform-origin:0 0">Generic Resistor</div><div class="t" style="left:292.55px;top:1694.39px;font-size:25.87px;color:#a6a6a6;transform:scaleX(0.9366);transform-origin:0 0">A generic fixed resistor for</div><div class="t" style="left:291.01px;top:1727.09px;font-size:24.69px;color:#a6a6a6;transform:scaleX(0.9738);transform-origin:0 0">rapid developing circuit...</div><div class="t" style="left:292.51px;top:1764.70px;font-size:23.73px;color:#2ee8a9;transform:scaleX(1.0208);transform-origin:0 0">jharwinbarrozo</div><svg class="a" style="left:458.6px;top:1762.4px;overflow:visible" width="28.8" height="28.8" viewBox="0 0 24 24"><path d="M12 2C6.48 2 2 6.48 2 12s4.48 10 10 10 10-4.48 10-10S17.52 2 12 2zm-2 15l-5-5 1.41-1.41L10 14.17l7.59-7.59L19 8l-9 9z" fill="#2ee8a9"/></svg><svg class="a" style="left:292.4px;top:1801.1px;overflow:visible" width="35.3" height="35.3" viewBox="0 0 24 24"><path d="M3.5 18.49l6-6.01 4 4L22 6.92l-1.41-1.41-7.09 7.97-4-4L2 16.99z" fill="#a5a5a5"/></svg><div class="t" style="left:331.71px;top:1803.53px;font-size:25.00px;color:#a5a5a5;transform:scaleX(0.9956);transform-origin:0 0">1.2M</div><svg class="a" style="left:406.8px;top:1799.2px;overflow:visible" width="34.3" height="34.3" viewBox="0 0 24 24"><path d="M22 9.24l-7.19-.62L12 2 9.19 8.63 2 9.24l5.46 4.73L5.82 21 12 17.27 18.18 21l-1.63-7.03L22 9.24zM12 15.4l-3.76 2.27 1-4.28-3.32-2.88 4.38-.38L12 6.1l1.71 4.04 4.38.38-3.32 2.88 1 4.28L12 15.4z" fill="#a5a5a5"/></svg><div class="t" style="left:444.87px;top:1803.53px;font-size:25.00px;color:#a5a5a5;transform:scaleX(1.0678);transform-origin:0 0">11</div><svg class="a" style="left:291.8px;top:1837.5px;overflow:visible" width="36.7" height="36.7" viewBox="0 0 24 24"><path d="M15 9H9v6h6V9zm-2 4h-2v-2h2v2zm8-2V9h-2V7c0-1.1-.9-2-2-2h-2V3h-2v2h-2V3H9v2H7c-1.1 0-2 .9-2 2v2H3v2h2v2H3v2h2v2c0 1.1.9 2 2 2h2v2h2v-2h2v2h2v-2h2c1.1 0 2-.9 2-2v-2h2v-2h-2v-2h2zm-4 6H7V7h10v10z" fill="#a5a5a5"/></svg><svg class="a" style="left:351.7px;top:1837.6px;overflow:visible" width="36.4" height="36.4" viewBox="0 0 24 24"><path d="M22 9V7h-2V5c0-1.1-.9-2-2-2H4c-1.1 0-2 .9-2 2v14c0 1.1.9 2 2 2h14c1.1 0 2-.9 2-2v-2h2v-2h-2v-2h2v-2h-2V9h2zm-4 10H4V5h14v14zM6 13h5v4H6zm6-6h4v3h-4zM6 7h5v5H6zm6 4h4v6h-4z" fill="#a5a5a5"/><path d="M2.2 3.4 L21.6 22.8" stroke="#2e2e2e" stroke-width="3.4"/><path d="M2.4 1.8 L22.4 21.8" stroke="#a5a5a5" stroke-width="2"/></svg><svg class="a" style="left:412.8px;top:1838.7px;overflow:visible" width="35.2" height="35.2" viewBox="0 0 24 24"><path d="M9.4 16.6L4.8 12l4.6-4.6L8 6l-6 6 6 6 1.4-1.4zm5.2 0l4.6-4.6-4.6-4.6L16 6l6 6-6 6-1.4-1.4z" fill="#a5a5a5"/></svg><svg class="a" style="left:474.9px;top:1840.1px;overflow:visible" width="31.1" height="31.1" viewBox="0 0 24 24"><path d="M12 2.6 L20.6 7.3 V16.7 L12 21.4 L3.4 16.7 V7.3 Z M3.4 7.3 L12 12 L20.6 7.3 M12 12 V21.4" fill="none" stroke="#a5a5a5" stroke-width="2.1" stroke-linejoin="round"/></svg><div class="a" style="left:112px;top:1617.0px;width:520px;height:2px;background:#1f1f1f"></div><svg class="a" style="left:130px;top:1700px" width="160" height="100" viewBox="130 1700 160 100"><path d="M144 1751.4 H167.3 L174.4 1772.6 L188 1729.6 L201.4 1772.6 L214.6 1729.6 L228 1772.6 L241.5 1729.6 L248 1751.4 H272" stroke="#c2c2c2" stroke-width="4.6" fill="none" stroke-linejoin="round"/></svg><div class="t" style="left:291.42px;top:1910.01px;font-size:29.51px;color:#f4f4f4;transform:scaleX(0.9337);transform-origin:0 0">Generic Capacitor</div><div class="t" style="left:292.55px;top:1959.89px;font-size:25.87px;color:#a6a6a6;transform:scaleX(0.9370);transform-origin:0 0">A generic fixed capacitor for</div><div class="t" style="left:291.01px;top:1992.59px;font-size:24.69px;color:#a6a6a6;transform:scaleX(0.9738);transform-origin:0 0">rapid developing circuit...</div><div class="t" style="left:292.51px;top:2030.20px;font-size:23.73px;color:#2ee8a9;transform:scaleX(1.0208);transform-origin:0 0">jharwinbarrozo</div><svg class="a" style="left:458.6px;top:2027.9px;overflow:visible" width="28.8" height="28.8" viewBox="0 0 24 24"><path d="M12 2C6.48 2 2 6.48 2 12s4.48 10 10 10 10-4.48 10-10S17.52 2 12 2zm-2 15l-5-5 1.41-1.41L10 14.17l7.59-7.59L19 8l-9 9z" fill="#2ee8a9"/></svg><svg class="a" style="left:292.4px;top:2066.6px;overflow:visible" width="35.3" height="35.3" viewBox="0 0 24 24"><path d="M3.5 18.49l6-6.01 4 4L22 6.92l-1.41-1.41-7.09 7.97-4-4L2 16.99z" fill="#a5a5a5"/></svg><div class="t" style="left:331.71px;top:2069.03px;font-size:25.00px;color:#a5a5a5;transform:scaleX(0.9956);transform-origin:0 0">1.4M</div><svg class="a" style="left:406.8px;top:2064.7px;overflow:visible" width="34.3" height="34.3" viewBox="0 0 24 24"><path d="M22 9.24l-7.19-.62L12 2 9.19 8.63 2 9.24l5.46 4.73L5.82 21 12 17.27 18.18 21l-1.63-7.03L22 9.24zM12 15.4l-3.76 2.27 1-4.28-3.32-2.88 4.38-.38L12 6.1l1.71 4.04 4.38.38-3.32 2.88 1 4.28L12 15.4z" fill="#a5a5a5"/></svg><div class="t" style="left:444.93px;top:2069.03px;font-size:25.00px;color:#a5a5a5;transform:scaleX(1.0393);transform-origin:0 0">13</div><svg class="a" style="left:291.8px;top:2103.0px;overflow:visible" width="36.7" height="36.7" viewBox="0 0 24 24"><path d="M15 9H9v6h6V9zm-2 4h-2v-2h2v2zm8-2V9h-2V7c0-1.1-.9-2-2-2h-2V3h-2v2h-2V3H9v2H7c-1.1 0-2 .9-2 2v2H3v2h2v2H3v2h2v2c0 1.1.9 2 2 2h2v2h2v-2h2v2h2v-2h2c1.1 0 2-.9 2-2v-2h2v-2h-2v-2h2zm-4 6H7V7h10v10z" fill="#a5a5a5"/></svg><svg class="a" style="left:351.7px;top:2103.1px;overflow:visible" width="36.4" height="36.4" viewBox="0 0 24 24"><path d="M22 9V7h-2V5c0-1.1-.9-2-2-2H4c-1.1 0-2 .9-2 2v14c0 1.1.9 2 2 2h14c1.1 0 2-.9 2-2v-2h2v-2h-2v-2h2v-2h-2V9h2zm-4 10H4V5h14v14zM6 13h5v4H6zm6-6h4v3h-4zM6 7h5v5H6zm6 4h4v6h-4z" fill="#a5a5a5"/><path d="M2.2 3.4 L21.6 22.8" stroke="#2e2e2e" stroke-width="3.4"/><path d="M2.4 1.8 L22.4 21.8" stroke="#a5a5a5" stroke-width="2"/></svg><svg class="a" style="left:412.8px;top:2104.2px;overflow:visible" width="35.2" height="35.2" viewBox="0 0 24 24"><path d="M9.4 16.6L4.8 12l4.6-4.6L8 6l-6 6 6 6 1.4-1.4zm5.2 0l4.6-4.6-4.6-4.6L16 6l6 6-6 6-1.4-1.4z" fill="#a5a5a5"/></svg><svg class="a" style="left:474.9px;top:2105.6px;overflow:visible" width="31.1" height="31.1" viewBox="0 0 24 24"><path d="M12 2.6 L20.6 7.3 V16.7 L12 21.4 L3.4 16.7 V7.3 Z M3.4 7.3 L12 12 L20.6 7.3 M12 12 V21.4" fill="none" stroke="#a5a5a5" stroke-width="2.1" stroke-linejoin="round"/></svg><div class="a" style="left:112px;top:1882.5px;width:520px;height:2px;background:#1f1f1f"></div><svg class="a" style="left:130px;top:1970px" width="160" height="90" viewBox="130 1970 160 90"><path d="M144 2015.8 H197.7 M218 2015.8 H271 M197.7 1990 V2042 M218 1990 V2042" stroke="#c2c2c2" stroke-width="4.2" fill="none"/></svg><div class="t" style="left:291.41px;top:2175.51px;font-size:29.51px;color:#f4f4f4;transform:scaleX(0.9418);transform-origin:0 0">Generic Inductor</div><div class="t" style="left:292.55px;top:2225.39px;font-size:25.87px;color:#a6a6a6;transform:scaleX(0.9295);transform-origin:0 0">A generic fixed inductor for</div><div class="t" style="left:291.01px;top:2258.09px;font-size:24.69px;color:#a6a6a6;transform:scaleX(0.9738);transform-origin:0 0">rapid developing circuit...</div><div class="t" style="left:292.51px;top:2295.70px;font-size:23.73px;color:#2ee8a9;transform:scaleX(1.0208);transform-origin:0 0">jharwinbarrozo</div><svg class="a" style="left:458.6px;top:2293.4px;overflow:visible" width="28.8" height="28.8" viewBox="0 0 24 24"><path d="M12 2C6.48 2 2 6.48 2 12s4.48 10 10 10 10-4.48 10-10S17.52 2 12 2zm-2 15l-5-5 1.41-1.41L10 14.17l7.59-7.59L19 8l-9 9z" fill="#2ee8a9"/></svg><div class="a" style="left:112px;top:2148.0px;width:520px;height:2px;background:#1f1f1f"></div><svg class="a" style="left:130px;top:2250px" width="160" height="60" viewBox="130 2250 160 60"><path d="M144 2292 H167.9 V2290 A10 13.5 0 0 1 187.9 2290 A10 13.5 0 0 1 207.9 2290 A10 13.5 0 0 1 227.9 2290 A10 13.5 0 0 1 247.9 2290 V2292 H272" stroke="#c2c2c2" stroke-width="4" fill="none"/></svg><div class="a" style="left:638px;top:602px;width:20px;height:1131px;border-radius:10px;background:#7a7a7a"></div><!-- /LEFT_CONTENT -->
<!-- ===== CANVAS ===== -->
<div class="a" style="left:664px;top:330px;width:2480px;height:1990px;background:#100e0f"></div>
<!-- CANVAS_CONTENT --><svg class="a" style="left:664px;top:330px" width="2480" height="1990" viewBox="664 330 2480 1990" font-family="Liberation Sans, sans-serif"><line x1="854.5" y1="330" x2="854.5" y2="2320" stroke="#262526" stroke-width="1.2"/><line x1="1748.5" y1="330" x2="1748.5" y2="2320" stroke="#262526" stroke-width="1.2"/><line x1="2643.5" y1="330" x2="2643.5" y2="2320" stroke="#262526" stroke-width="1.2"/><line x1="664" y1="776" x2="3144" y2="776" stroke="#262526" stroke-width="1.2"/><line x1="664" y1="1670" x2="3144" y2="1670" stroke="#262526" stroke-width="1.2"/><rect x="1006.5" y="710.5" width="416.5" height="731" stroke="#e4e4e4" stroke-width="3.2" fill="#100e0f"/><line x1="1423" y1="762.7" x2="1530" y2="762.7" stroke="#e4e4e4" stroke-width="3.4"/><line x1="1423" y1="868.6" x2="1530" y2="868.6" stroke="#e4e4e4" stroke-width="3.4"/><line x1="1423" y1="920" x2="1530" y2="920" stroke="#e4e4e4" stroke-width="3.4"/><line x1="1423" y1="1025.6" x2="1530" y2="1025.6" stroke="#e4e4e4" stroke-width="3.4"/><line x1="1423" y1="1076.4" x2="1530" y2="1076.4" stroke="#e4e4e4" stroke-width="3.4"/><line x1="1423" y1="1127.6" x2="1530" y2="1127.6" stroke="#e4e4e4" stroke-width="3.4"/><line x1="1423" y1="1181.7" x2="1530" y2="1181.7" stroke="#e4e4e4" stroke-width="3.4"/><line x1="1423" y1="1335.8" x2="1530" y2="1335.8" stroke="#e4e4e4" stroke-width="3.4"/><line x1="1423" y1="1390" x2="1530" y2="1390" stroke="#e4e4e4" stroke-width="3.4"/><line x1="1058" y1="1442" x2="1058" y2="1547" stroke="#e4e4e4" stroke-width="3.4"/><line x1="1058" y1="1547" x2="1058" y2="1618" stroke="#a6a6a6" stroke-width="3.4"/><line x1="1214.3" y1="1442" x2="1214.3" y2="1547" stroke="#e4e4e4" stroke-width="3.4"/><line x1="1214.3" y1="1547" x2="1214.3" y2="1618" stroke="#a6a6a6" stroke-width="3.4"/><path d="M1058 1547 L1058 1618 L1214.3 1618" stroke="#a6a6a6" stroke-width="3.4" fill="none" stroke-linejoin="bevel"/><line x1="1214.3" y1="1618" x2="1214.3" y2="1736" stroke="#a6a6a6" stroke-width="3.4"/><line x1="1214.3" y1="1736" x2="1214.3" y2="1774" stroke="#e4e4e4" stroke-width="3.4"/><line x1="1186.8" y1="1774.3" x2="1241.8" y2="1774.3" stroke="#e4e4e4" stroke-width="4.2"/><line x1="1197.8" y1="1789.0" x2="1230.8" y2="1789.0" stroke="#e4e4e4" stroke-width="4.2"/><line x1="1205.3" y1="1803.7" x2="1223.3" y2="1803.7" stroke="#e4e4e4" stroke-width="4.2"/><circle cx="1214.3" cy="1618" r="5.2" fill="#a6a6a6"/><rect x="1066.5" y="957" width="70" height="238" rx="35" stroke="#e4e4e4" stroke-width="2.6" fill="none"/><rect x="1082.7" y="974" width="36.6" height="205" rx="18.3" fill="#e4e4e4"/><path d="M1236.6 950 L1236.6 1187" stroke="#dcdbdc" stroke-width="11" fill="none"/><path d="M1217.5 956 L1255.6 956 L1236.6 922 Z" fill="#dcdbdc"/><circle cx="1236.5" cy="1187" r="27.3" fill="#dcdbdc"/><circle cx="1187.5" cy="1034.4" r="16.4" fill="#dcdbdc"/><path d="M1187.5 1034 L1187.5 1087 L1236.6 1134" stroke="#dcdbdc" stroke-width="11" fill="none" stroke-linejoin="round"/><rect x="1269" y="978" width="33" height="34" fill="#dcdbdc"/><path d="M1285.5 1010 L1285.5 1043.6 L1236.6 1090" stroke="#dcdbdc" stroke-width="11" fill="none" stroke-linejoin="round"/><line x1="1530" y1="762.7" x2="2071" y2="762.7" stroke="#a6a6a6" stroke-width="3.4"/><line x1="2071" y1="762.7" x2="2122" y2="762.7" stroke="#e4e4e4" stroke-width="3.4"/><circle cx="1984" cy="762.7" r="5.2" fill="#a6a6a6"/><line x1="1530" y1="868.6" x2="1615" y2="868.6" stroke="#a6a6a6" stroke-width="3.4"/><line x1="1615" y1="868.6" x2="1635" y2="868.6" stroke="#e4e4e4" stroke-width="3.4"/><path d="M1635 868.6 L1641.3 890.4 L1653.8 848.4 L1666.6 890.4 L1679 848.4 L1691.8 890.4 L1704.2 848.4 L1711 868.6" stroke="#e4e4e4" stroke-width="4.2" fill="none" stroke-linejoin="bevel"/><line x1="1711" y1="868.6" x2="1731" y2="868.6" stroke="#e4e4e4" stroke-width="3.4"/><path d="M1731 868.6 L1867 868.6 L1867 1002.3 L2440 1002.3" stroke="#a6a6a6" stroke-width="3.4" fill="none" stroke-linejoin="bevel"/><line x1="1530" y1="920" x2="1618" y2="920" stroke="#a6a6a6" stroke-width="3.4"/><line x1="1618" y1="920" x2="1638.7" y2="920" stroke="#e4e4e4" stroke-width="3.4"/><path d="M1638.7 920 L1646 941.8 L1658 898.8 L1671 941.8 L1683 898.8 L1696 941.8 L1708.5 898.8 L1715 920" stroke="#e4e4e4" stroke-width="4.2" fill="none" stroke-linejoin="bevel"/><line x1="1715" y1="920" x2="1735" y2="920" stroke="#e4e4e4" stroke-width="3.4"/><line x1="1735" y1="920" x2="1867" y2="920" stroke="#a6a6a6" stroke-width="3.4"/><circle cx="1867" cy="920" r="5.2" fill="#a6a6a6"/><line x1="1984" y1="762.7" x2="1984" y2="818" stroke="#a6a6a6" stroke-width="3.4"/><line x1="1984" y1="818" x2="1984" y2="867" stroke="#e4e4e4" stroke-width="3.4"/><line x1="1960" y1="867" x2="2008" y2="867" stroke="#e4e4e4" stroke-width="4"/><line x1="1960" y1="885.4" x2="2008" y2="885.4" stroke="#e4e4e4" stroke-width="4"/><line x1="1984" y1="885.4" x2="1984" y2="935" stroke="#e4e4e4" stroke-width="3.4"/><line x1="1984" y1="935" x2="1984" y2="1002.3" stroke="#a6a6a6" stroke-width="3.4"/><circle cx="1984" cy="1002.3" r="5.2" fill="#a6a6a6"/><rect x="2122" y="722.5" width="213" height="147" stroke="#e4e4e4" stroke-width="3.2" fill="#100e0f"/><line x1="2335" y1="763.6" x2="2387" y2="763.6" stroke="#e4e4e4" stroke-width="3.4"/><line x1="2387" y1="763.6" x2="2778" y2="763.6" stroke="#a6a6a6" stroke-width="3.4"/><line x1="2778" y1="763.6" x2="2876" y2="763.6" stroke="#e4e4e4" stroke-width="3.4"/><circle cx="2885" cy="763.6" r="8.6" stroke="#e4e4e4" stroke-width="3.4" fill="#100e0f"/><circle cx="2440" cy="763.6" r="5.2" fill="#a6a6a6"/><circle cx="2685.4" cy="763.6" r="5.2" fill="#a6a6a6"/><path d="M2685.4 763.6 L2685.4 838 L2779 838" stroke="#a6a6a6" stroke-width="3.4" fill="none" stroke-linejoin="bevel"/><line x1="2779" y1="838" x2="2897" y2="838" stroke="#e4e4e4" stroke-width="3.4"/><line x1="2228.3" y1="869.5" x2="2228.3" y2="921" stroke="#e4e4e4" stroke-width="3.4"/><line x1="2228.3" y1="921" x2="2228.3" y2="1002.4" stroke="#a6a6a6" stroke-width="3.4"/><circle cx="2228.3" cy="1002.4" r="5.2" fill="#a6a6a6"/><line x1="2440" y1="763.6" x2="2440" y2="817" stroke="#a6a6a6" stroke-width="3.4"/><line x1="2440" y1="817" x2="2440" y2="867" stroke="#e4e4e4" stroke-width="3.4"/><line x1="2417" y1="867" x2="2464" y2="867" stroke="#e4e4e4" stroke-width="4"/><line x1="2417" y1="885.7" x2="2464" y2="885.7" stroke="#e4e4e4" stroke-width="4"/><line x1="2440" y1="885.7" x2="2440" y2="934.5" stroke="#e4e4e4" stroke-width="3.4"/><line x1="2440" y1="934.5" x2="2440" y2="1037.5" stroke="#a6a6a6" stroke-width="3.4"/><line x1="2440" y1="1037.5" x2="2440" y2="1076" stroke="#e4e4e4" stroke-width="3.4"/><circle cx="2440" cy="1002.4" r="5.2" fill="#a6a6a6"/><line x1="2413.0" y1="1076" x2="2468.0" y2="1076" stroke="#e4e4e4" stroke-width="4.2"/><line x1="2424.0" y1="1090.7" x2="2457.0" y2="1090.7" stroke="#e4e4e4" stroke-width="4.2"/><line x1="2431.5" y1="1105.4" x2="2449.5" y2="1105.4" stroke="#e4e4e4" stroke-width="4.2"/><path d="M1530 1025.6 L1652 1025.6 L1652 1076.4 L1530 1076.4" stroke="#a6a6a6" stroke-width="3.4" fill="none" stroke-linejoin="bevel"/><circle cx="1652" cy="1053.4" r="5.2" fill="#a6a6a6"/><path d="M1652 1053.4 L1829.6 1053.4 L1829.6 1242 L1998 1242" stroke="#a6a6a6" stroke-width="3.4" fill="none" stroke-linejoin="bevel"/><line x1="1998" y1="1242" x2="2105" y2="1242" stroke="#e4e4e4" stroke-width="3.4"/><path d="M1530 1127.6 L1652 1127.6 L1652 1181.7 L1530 1181.7" stroke="#a6a6a6" stroke-width="3.4" fill="none" stroke-linejoin="bevel"/><circle cx="1652" cy="1155.5" r="5.2" fill="#a6a6a6"/><path d="M1652 1155.5 L1748 1155.5 L1748 1343.7 L1998 1343.7" stroke="#a6a6a6" stroke-width="3.4" fill="none" stroke-linejoin="bevel"/><line x1="1998" y1="1343.7" x2="2105" y2="1343.7" stroke="#e4e4e4" stroke-width="3.4"/><line x1="1834" y1="1293.3" x2="1951" y2="1293.3" stroke="#e4e4e4" stroke-width="3.4"/><line x1="1951" y1="1293.3" x2="1998" y2="1293.3" stroke="#a6a6a6" stroke-width="3.4"/><line x1="1998" y1="1293.3" x2="2105" y2="1293.3" stroke="#e4e4e4" stroke-width="3.4"/><rect x="2105" y="1216.5" width="316" height="154" stroke="#e4e4e4" stroke-width="3.2" fill="#100e0f"/><line x1="2421" y1="1242" x2="2527" y2="1242" stroke="#e4e4e4" stroke-width="3.4"/><line x1="2527" y1="1242" x2="2557" y2="1242" stroke="#a6a6a6" stroke-width="3.4"/><line x1="2557" y1="1242" x2="2655" y2="1242" stroke="#e4e4e4" stroke-width="3.4"/><circle cx="2663.5" cy="1242" r="8.2" stroke="#e4e4e4" stroke-width="3.4" fill="#100e0f"/><line x1="2421" y1="1344.5" x2="2527" y2="1344.5" stroke="#e4e4e4" stroke-width="3.4"/><line x1="2527" y1="1344.5" x2="2557" y2="1344.5" stroke="#a6a6a6" stroke-width="3.4"/><line x1="2557" y1="1344.5" x2="2655" y2="1344.5" stroke="#e4e4e4" stroke-width="3.4"/><circle cx="2663.5" cy="1344.5" r="8.2" stroke="#e4e4e4" stroke-width="3.4" fill="#100e0f"/><line x1="2421" y1="1293.3" x2="2521" y2="1293.3" stroke="#e4e4e4" stroke-width="3.4"/><line x1="2521" y1="1293.3" x2="2824" y2="1293.3" stroke="#a6a6a6" stroke-width="3.4"/><line x1="2824" y1="1293.3" x2="2922" y2="1293.3" stroke="#e4e4e4" stroke-width="3.4"/><circle cx="2931" cy="1293.3" r="8.2" stroke="#e4e4e4" stroke-width="3.4" fill="#100e0f"/><circle cx="2780" cy="1293.3" r="5.2" fill="#a6a6a6"/><line x1="2780" y1="1293.3" x2="2780" y2="1344" stroke="#a6a6a6" stroke-width="3.4"/><line x1="2780" y1="1344" x2="2780" y2="1382" stroke="#e4e4e4" stroke-width="3.4"/><line x1="2752.8" y1="1382.4" x2="2807.8" y2="1382.4" stroke="#e4e4e4" stroke-width="4.2"/><line x1="2763.8" y1="1397.1000000000001" x2="2796.8" y2="1397.1000000000001" stroke="#e4e4e4" stroke-width="4.2"/><line x1="2771.3" y1="1411.8000000000002" x2="2789.3" y2="1411.8000000000002" stroke="#e4e4e4" stroke-width="4.2"/></svg><div class="a" style="left:703px;top:2210px;width:114px;height:68px;border-radius:34px;background:#2f2e2f;box-shadow:0 2px 8px rgba(0,0,0,0.6)"></div><svg class="a" style="left:728px;top:2226px" width="36" height="36" viewBox="0 0 36 36"><path d="M6.2 6.3 H30.6 V30.4 L26.8 26.6 H6.2 Z" stroke="#fff" stroke-width="2.8" fill="none" stroke-linejoin="miter"/></svg><div class="t" style="left:773.89px;top:2229.29px;font-size:29.65px;color:#f4f4f4;transform:scaleX(0.9576);transform-origin:0 0">0</div><div class="a" style="left:2928px;top:2196px;width:80px;height:80px;border-radius:50%;background:#2f2e2f;box-shadow:0 2px 8px rgba(0,0,0,0.6)"></div><div class="a" style="left:3024px;top:2196px;width:80px;height:80px;border-radius:50%;background:#2f2e2f;box-shadow:0 2px 8px rgba(0,0,0,0.6)"></div><svg class="a" style="left:2948px;top:2216px" width="40" height="40" viewBox="0 0 40 40"><rect x="0" y="0" width="40" height="40" fill="#fff"/><rect x="4" y="4" width="8" height="8" fill="#2f2e2f"/><rect x="4" y="16" width="8" height="8" fill="#2f2e2f"/><rect x="4" y="28" width="8" height="8" fill="#2f2e2f"/><rect x="16" y="4" width="8" height="8" fill="#2f2e2f"/><rect x="16" y="16" width="8" height="8" fill="#2f2e2f"/><rect x="16" y="28" width="8" height="8" fill="#2f2e2f"/><rect x="28" y="4" width="8" height="8" fill="#2f2e2f"/><rect x="28" y="16" width="8" height="8" fill="#2f2e2f"/><rect x="28" y="28" width="8" height="8" fill="#2f2e2f"/></svg><svg class="a" style="left:3050px;top:2222px" width="28" height="28" viewBox="0 0 28 28"><path d="M2.1 10.3 V2.1 H10.3 M17.7 2.1 H25.9 V10.3 M25.9 17.7 V25.9 H17.7 M10.3 25.9 H2.1 V17.7" stroke="#fff" stroke-width="4.2" fill="none"/></svg><div class="t" style="left:1195.35px;top:679.47px;font-size:19.04px;color:#e8e8e8;font-weight:700;transform:scaleX(0.8835);transform-origin:0 0">J1</div><div class="t" style="left:1677.91px;top:795.30px;font-size:17.01px;color:#e8e8e8;font-weight:700;transform:scaleX(0.9677);transform-origin:0 0">R1</div><div class="t" style="left:1664.81px;top:817.54px;font-size:18.60px;color:#e8e8e8;transform:scaleX(0.9326);transform-origin:0 0">5.1k Ω</div><div class="t" style="left:1665.87px;top:953.06px;font-size:18.46px;color:#e8e8e8;font-weight:700;transform:scaleX(0.9237);transform-origin:0 0">R2</div><div class="t" style="left:1652.10px;top:976.54px;font-size:18.60px;color:#e8e8e8;transform:scaleX(0.9365);transform-origin:0 0">5.1k Ω</div><div class="t" style="left:2024.33px;top:864.23px;font-size:17.44px;color:#e8e8e8;font-weight:700;transform:scaleX(0.9334);transform-origin:0 0">C1</div><div class="t" style="left:2023.67px;top:886.28px;font-size:19.62px;color:#e8e8e8;transform:scaleX(0.8922);transform-origin:0 0">1u F</div><div class="t" style="left:2222.92px;top:667.76px;font-size:18.46px;color:#e8e8e8;font-weight:700;transform:scaleX(0.9787);transform-origin:0 0">U2</div><div class="t" style="left:2174.48px;top:690.24px;font-size:20.49px;color:#e8e8e8;transform:scaleX(0.8433);transform-origin:0 0">ME6206A33XG</div><div class="t" style="left:2481.32px;top:858.86px;font-size:19.77px;color:#e8e8e8;font-weight:700;transform:scaleX(0.8445);transform-origin:0 0">C2</div><div class="t" style="left:2480.69px;top:882.63px;font-size:19.33px;color:#e8e8e8;transform:scaleX(0.8919);transform-origin:0 0">1u F</div><div class="t" style="left:2816.92px;top:723.63px;font-size:19.33px;color:#e8e8e8;font-weight:700;transform:scaleX(0.9012);transform-origin:0 0">3V3</div><div class="t" style="left:2826.90px;top:805.51px;font-size:20.06px;color:#e8e8e8;font-weight:700;transform:scaleX(0.7971);transform-origin:0 0">VDD</div><div class="t" style="left:1871.51px;top:1261.86px;font-size:17.88px;color:#e8e8e8;font-weight:700;transform:scaleX(0.8835);transform-origin:0 0">VDD</div><div class="t" style="left:2224.82px;top:1160.88px;font-size:19.62px;color:#e8e8e8;font-weight:700;transform:scaleX(0.9176);transform-origin:0 0">U3</div><div class="t" style="left:2169.99px;top:1184.62px;font-size:18.75px;color:#e8e8e8;transform:scaleX(0.9181);transform-origin:0 0">NUF2221W1T2G</div><div class="t" style="left:2606.32px;top:1202.82px;font-size:18.75px;color:#e8e8e8;font-weight:700;transform:scaleX(0.9498);transform-origin:0 0">D-</div><div class="t" style="left:2598.84px;top:1305.06px;font-size:18.46px;color:#e8e8e8;font-weight:700;transform:scaleX(0.9480);transform-origin:0 0">D+</div><div class="t" style="left:2957.74px;top:1285.11px;font-size:18.17px;color:#e8e8e8;font-weight:700;transform:scaleX(0.8822);transform-origin:0 0">GND</div><!-- /CANVAS_CONTENT -->
<!-- ===== RIGHT PANEL ===== -->
<div class="a" style="left:3144px;top:330px;width:552px;height:1990px;background:#2e2e2e"></div>
<div class="a" style="left:112px;top:330px;width:3584px;height:16px;background:linear-gradient(180deg,rgba(0,0,0,0.32),rgba(0,0,0,0))"></div>
<!-- RIGHT_CONTENT --><div class="a" style="left:3144px;top:1471.5px;width:520px;height:32.5px;background:#1f1f1f"></div><div class="a" style="left:3144px;top:1600px;width:520px;height:32px;background:#1f1f1f"></div><div class="a" style="left:3144px;top:1902px;width:520px;height:31.5px;background:#1f1f1f"></div><div class="t" style="left:3174.94px;top:375.89px;font-size:32.12px;color:#f4f4f4;transform:scaleX(0.9130);transform-origin:0 0">USB-C Receptacle with built-</div><div class="t" style="left:3175.26px;top:421.95px;font-size:30.52px;color:#f4f4f4;transform:scaleX(0.9606);transform-origin:0 0">in ESD Protection and 3V3</div><div class="t" style="left:3175.47px;top:467.64px;font-size:29.94px;color:#f4f4f4;transform:scaleX(0.9902);transform-origin:0 0">LDO Smart Module</div><svg class="a" style="left:3596px;top:427px" width="24" height="21" viewBox="0 0 24 21"><path d="M3 15 L12 6 L21 15" stroke="#7c7c7c" stroke-width="3.6" fill="none"/></svg><svg class="a" style="left:3260px;top:560px" width="320" height="300" viewBox="3260 560 320 300">
<rect x="3276" y="572.5" width="234" height="268.5" stroke="#d6d6d6" stroke-width="3.2" fill="none"/>
<path d="M3511.6 629 H3563.6 M3511.6 681 H3563.6 M3511.6 732.7 H3563.6 M3511.6 784.7 H3563.6" stroke="#d6d6d6" stroke-width="3.2"/>
<path d="M3418.9 602 L3475.3 634.6 V695.4 L3418.9 728 L3362.5 695.4 V634.6 Z" stroke="#d6d6d6" stroke-width="3.6" fill="none" stroke-linejoin="round"/>
<g transform="translate(3387.1 631.6) scale(2.815)"><path d="M22 9V7h-2V5c0-1.1-.9-2-2-2H4c-1.1 0-2 .9-2 2v14c0 1.1.9 2 2 2h14c1.1 0 2-.9 2-2v-2h2v-2h-2v-2h2v-2h-2V9h2zm-4 10H4V5h14v14zM6 13h5v4H6zm6-6h4v3h-4zM6 7h5v5H6zm6 4h4v6h-4z" fill="#d6d6d6"/></g>
<g transform="translate(3292.7 705.5) scale(0.38) translate(-1170.9 -922)">
<path d="M1236.6 950 L1236.6 1187" stroke="#d6d6d6" stroke-width="11" fill="none"/>
<path d="M1217.5 956 L1255.6 956 L1236.6 922 Z" fill="#d6d6d6"/>
<circle cx="1236.5" cy="1187" r="27.3" fill="#d6d6d6"/>
<circle cx="1187.5" cy="1034.4" r="16.4" fill="#d6d6d6"/>
<path d="M1187.5 1034 L1187.5 1087 L1236.6 1134" stroke="#d6d6d6" stroke-width="11" fill="none" stroke-linejoin="round"/>
<rect x="1269" y="978" width="33" height="34" fill="#d6d6d6"/>
<path d="M1285.5 1010 L1285.5 1043.6 L1236.6 1090" stroke="#d6d6d6" stroke-width="11" fill="none" stroke-linejoin="round"/>
</g></svg><div class="t" style="left:3175.18px;top:888.96px;font-size:25.44px;color:#a3a3a3;transform:scaleX(0.9667);transform-origin:0 0">Description</div><div class="t" style="left:3174.79px;top:929.64px;font-size:33.72px;color:#f4f4f4;transform:scaleX(0.9284);transform-origin:0 0">USB-C Receptacle with built-in</div><div class="t" style="left:3174.66px;top:977.52px;font-size:34.45px;color:#f4f4f4;transform:scaleX(0.8991);transform-origin:0 0">ESD Protection and 3V3 LDO</div><div class="t" style="left:3177.07px;top:1025.35px;font-size:34.30px;color:#f4f4f4;transform:scaleX(0.9246);transform-origin:0 0">Voltage Regulator. This is</div><div class="t" style="left:3175.08px;top:1074.76px;font-size:31.69px;color:#f4f4f4;transform:scaleX(1.0120);transform-origin:0 0">reusable to any of your projects.</div><div class="t" style="left:3176.02px;top:1132.53px;font-size:25.58px;color:#a3a3a3;transform:scaleX(0.9197);transform-origin:0 0">Created</div><div class="t" style="left:3174.62px;top:1173.91px;font-size:33.28px;color:#f4f4f4;transform:scaleX(0.9465);transform-origin:0 0">December 22nd 2021</div><div class="t" style="left:3175.24px;top:1233.03px;font-size:25.00px;color:#a3a3a3;transform:scaleX(0.9566);transform-origin:0 0">Last updated by</div><div class="t" style="left:3352.20px;top:1234.22px;font-size:23.59px;color:#2ee8a9;transform:scaleX(1.0254);transform-origin:0 0">jharwinbarrozo</div><div class="t" style="left:3175.58px;top:1273.30px;font-size:32.70px;color:#f4f4f4;transform:scaleX(0.9919);transform-origin:0 0">2 months ago</div><div class="t" style="left:3175.35px;top:1331.97px;font-size:24.71px;color:#a3a3a3;transform:scaleX(0.9867);transform-origin:0 0">1 Contributor(s)</div><svg class="a" style="left:3176px;top:1366px" width="80" height="80" viewBox="0 0 100 100"><defs><clipPath id="avC"><circle cx="50" cy="50" r="50"/></clipPath></defs><g clip-path="url(#avC)">
<rect width="100" height="100" fill="#b8c2c8"/>
<rect y="48" width="100" height="12" fill="#8a9090"/>
<rect y="58" width="100" height="22" fill="#4a3c32"/>
<rect y="78" width="100" height="22" fill="#8c8a7a"/>
<path d="M66 6 L86 18 L82 26 L68 26 Z" fill="#1e1e1e"/>
<path d="M80 30 L98 30 L98 48 L72 48 Z" fill="#3a3a34"/>
<path d="M20 100 L28 86 L40 84 L40 100 Z" fill="#d8d8d8"/>
<ellipse cx="48" cy="57" rx="21" ry="32" fill="#a87058"/>
<path d="M27 38 C27 18 38 14 48 14 C60 14 68 20 68 38 C60 30 36 30 27 38 Z" fill="#686664"/>
<path d="M34 76 C38 88 44 92 50 92 C56 92 62 88 66 76 C60 82 56 80 50 80 C44 80 40 82 34 76 Z" fill="#4a3226"/>
<path d="M38 66 C44 62 56 62 60 66 L58 70 C54 68 44 68 40 70 Z" fill="#4a3428"/>
</g></svg><div class="t" style="left:3175.78px;top:1535.89px;font-size:32.12px;color:#f4f4f4;transform:scaleX(0.9439);transform-origin:0 0">Controls</div><svg class="a" style="left:3596px;top:1542px" width="24" height="21" viewBox="0 0 24 21"><path d="M3 6 L12 15 L21 6" stroke="#7c7c7c" stroke-width="3.6" fill="none"/></svg><div class="t" style="left:3174.79px;top:1680.62px;font-size:31.98px;color:#f4f4f4;transform:scaleX(0.9558);transform-origin:0 0">Properties</div><svg class="a" style="left:3596px;top:1685px" width="24" height="21" viewBox="0 0 24 21"><path d="M3 15 L12 6 L21 15" stroke="#7c7c7c" stroke-width="3.6" fill="none"/></svg><div class="t" style="left:3175.35px;top:1793.96px;font-size:25.44px;color:#a3a3a3;transform:scaleX(0.9359);transform-origin:0 0">Designator Prefix</div><div class="t" style="left:3175.97px;top:1834.93px;font-size:33.14px;color:#f4f4f4;transform:scaleX(0.8912);transform-origin:0 0">SUBLAYOUT</div><div class="t" style="left:3176.44px;top:1983.05px;font-size:31.10px;color:#f4f4f4;transform:scaleX(0.9660);transform-origin:0 0">Availability &amp; Pricing</div><svg class="a" style="left:3596px;top:1987px" width="24" height="21" viewBox="0 0 24 21"><path d="M3 15 L12 6 L21 15" stroke="#7c7c7c" stroke-width="3.6" fill="none"/></svg><div class="t" style="left:3176.44px;top:2081.67px;font-size:30.38px;color:#f4f4f4;transform:scaleX(0.9250);transform-origin:0 0">Add a Manufacturer Part Number to</div><div class="t" style="left:3175.74px;top:2122.60px;font-size:28.81px;color:#f4f4f4;transform:scaleX(0.9769);transform-origin:0 0">see inline results.</div><div class="a" style="left:3176.5px;top:2174.4px;width:451.5px;height:94px;background:#404040"></div><div class="a" style="left:3176.5px;top:2284px;width:451.5px;height:40px;background:#404040"></div><div class="t" style="left:3206.23px;top:2205.07px;font-size:30.38px;color:#f4f4f4;transform:scaleX(0.9511);transform-origin:0 0">Mouser</div><div class="t" style="left:3461.15px;top:2205.16px;font-size:29.80px;color:#2ee8a9;font-weight:700;transform:scaleX(0.8187);transform-origin:0 0">VISIT SITE</div><div class="a" style="left:3670px;top:336px;width:20px;height:1622px;border-radius:10px;background:#7a7a7a"></div><div class="a" style="left:3691px;top:330px;width:5px;height:1990px;background:#151515"></div><!-- /RIGHT_CONTENT -->
</div></div>
<div id="bd"></div>
</body></html>
